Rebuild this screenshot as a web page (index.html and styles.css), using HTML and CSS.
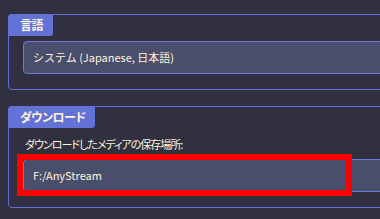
FILE: index.html
```html
<!DOCTYPE html>
<html lang="ja">
<head>
    <meta charset="UTF-8">
    <title>設定</title>
    <link rel="stylesheet" href="styles.css">
</head>
<body>
    <!-- 言語 -->
    <div class="panel">
        <div class="panel-title">言語</div>
        <div class="panel-body">
            <div class="field">システム (Japanese, 日本語)</div>
        </div>
    </div>

    <!-- ダウンロード -->
    <div class="panel">
        <div class="panel-title">ダウンロード</div>
        <div class="panel-body">
            <div class="label">ダウンロードしたメディアの保存場所:</div>
            <div class="field-wrap">
                <div class="field">F:/AnyStream</div>
                <div class="highlight"></div>
            </div>
        </div>
    </div>
</body>
</html>
```

FILE: styles.css
```css
html, body {
    margin: 0;
    padding: 0;
    background-color: #303040;
    overflow: hidden;
}
body {
    padding: 14px 0 0 8px;
    font-family: "Noto Sans CJK JP", "DejaVu Sans", sans-serif;
    font-size: 11px;
    color: #fff2dc;
}
.panel {
    width: 390px;
    border: 1px solid #5f6fd6;
    border-radius: 4px;
    margin-bottom: 16px;
}
.panel-title {
    display: inline-block;
    margin: -1px 0 0 -1px;
    height: 22px;
    line-height: 22px;
    padding: 0 10px 0 12px;
    background-color: #6372d6;
    border-top-left-radius: 4px;
    border-bottom-right-radius: 3px;
    font-weight: bold;
    font-size: 12px;
    letter-spacing: -0.5px;
    font-feature-settings: "palt";
}
.panel-body {
    padding: 5px 0 15px 14px;
}
.label {
    padding: 3px 0 0 2px;
    height: 23px;
    line-height: 16px;
    font-size: 11px;
    letter-spacing: -1px;
    font-feature-settings: "palt";
}
.field-wrap {
    position: relative;
}
.field {
    height: 31px;
    line-height: 31px;
    padding-left: 9px;
    border: 1px solid #6a7ad8;
    border-radius: 4px;
    background-color: #4a4e6d;
}
/* 赤い枠（注釈） */
.highlight {
    position: absolute;
    left: -6px;
    top: -5px;
    width: 323px;
    height: 30px;
    border: 6px solid #ff0000;
}
```
